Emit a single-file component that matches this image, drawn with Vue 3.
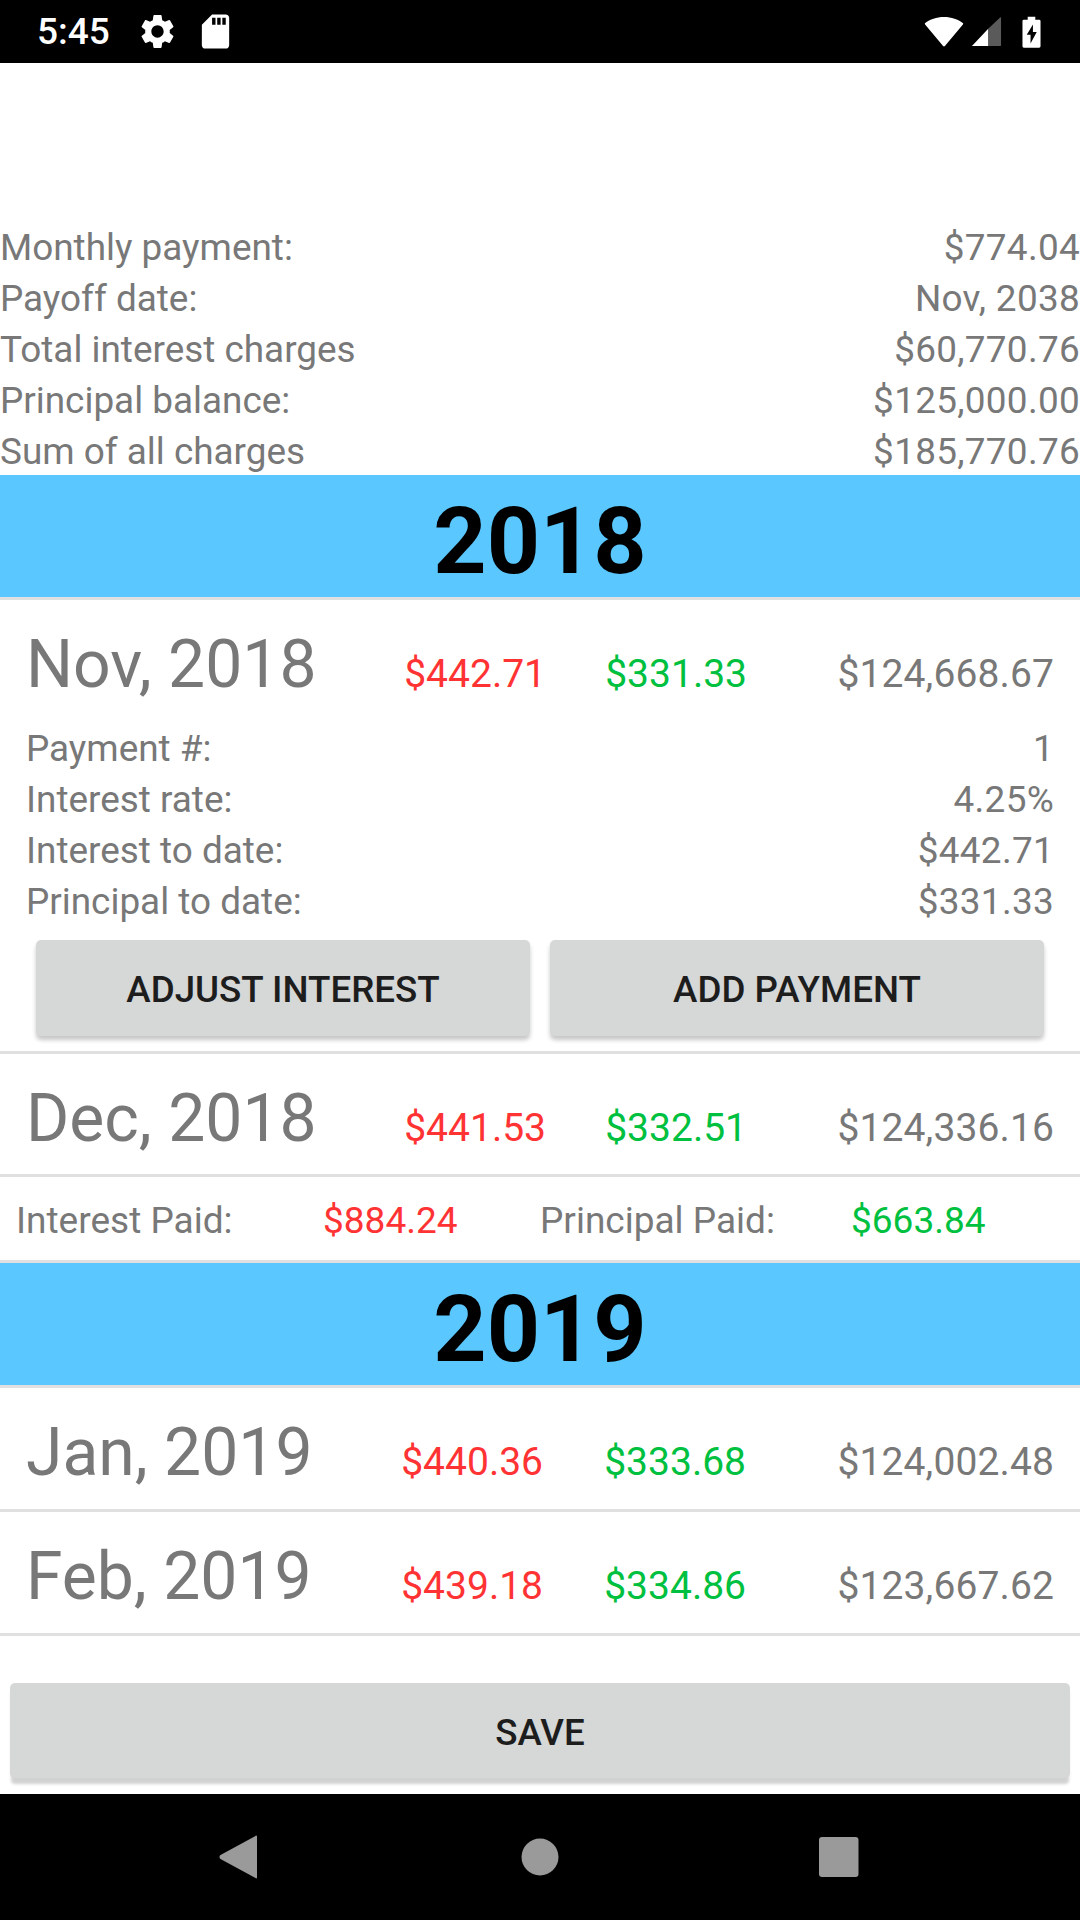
<script setup>
const summary = [
  ['Monthly payment:', '$774.04'],
  ['Payoff date:', 'Nov, 2038'],
  ['Total interest charges', '$60,770.76'],
  ['Principal balance:', '$125,000.00'],
  ['Sum of all charges', '$185,770.76'],
]
const details = [
  ['Payment #:', '1'],
  ['Interest rate:', '4.25%'],
  ['Interest to date:', '$442.71'],
  ['Principal to date:', '$331.33'],
]
</script>

<template>
  <div class="screen">
    <header class="status">
      <span class="time">5:45</span>
      <svg class="ic gear" viewBox="0 0 24 24"><path fill="#fff" d="M19.14 12.94c.04-.3.06-.61.06-.94 0-.32-.02-.64-.07-.94l2.03-1.58a.49.49 0 0 0 .12-.61l-1.92-3.32a.488.488 0 0 0-.59-.22l-2.39.96c-.5-.38-1.03-.7-1.62-.94l-.36-2.54a.484.484 0 0 0-.48-.41h-3.84c-.24 0-.43.17-.47.41l-.36 2.54c-.59.24-1.13.57-1.62.94l-2.39-.96c-.22-.08-.47 0-.59.22L2.74 8.87c-.12.21-.08.47.12.61l2.03 1.58c-.05.3-.09.63-.09.94s.02.64.07.94l-2.03 1.58a.49.49 0 0 0-.12.61l1.92 3.32c.12.22.37.29.59.22l2.39-.96c.5.38 1.03.7 1.62.94l.36 2.54c.05.24.24.41.48.41h3.84c.24 0 .44-.17.47-.41l.36-2.54c.59-.24 1.13-.56 1.62-.94l2.39.96c.22.08.47 0 .59-.22l1.92-3.32c.12-.22.07-.47-.12-.61l-2.01-1.58zM12 15.6c-1.98 0-3.6-1.62-3.6-3.6s1.62-3.6 3.6-3.6 3.6 1.62 3.6 3.6-1.62 3.6-3.6 3.6z"/></svg>
      <svg class="ic sd" viewBox="0 0 24 24"><path fill="#fff" d="M18 2h-8L4.02 8 4 20c0 1.1.9 2 2 2h12c1.1 0 2-.9 2-2V4c0-1.1-.9-2-2-2zm-6 6h-2V4h2v4zm3 0h-2V4h2v4zm3 0h-2V4h2v4z"/></svg>
      <span class="grow"></span>
      <svg class="wifi" viewBox="0 0 42 34"><path fill="#fff" d="M21 1C13 1 6 3.500 1 7.500a1 1 0 0 0-.1 1.500L19.800 31.600a1.600 1.600 0 0 0 2.400 0L41.100 9a1 1 0 0 0-.1-1.500C36 3.500 29 1 21 1z"/></svg>
      <svg class="signal" viewBox="0 0 32 32"><path fill="#fff" d="M1 31 18 13v18H1.500a.5.500 0 0 1-.5-.5z"/><path fill="#5a5a5a" d="M18 13 30 1.500c.5-.5 1-.2 1 .5v28c0 .6-.4 1-1 1H18z"/></svg>
      <svg class="batt" viewBox="0 0 20 34"><path fill="#fff" fill-rule="evenodd" d="M6 1h8v3h4a1.500 1.500 0 0 1 1.500 1.500v26.500a1.500 1.500 0 0 1-1.500 1.500H2A1.500 1.500 0 0 1 .5 32V5.500A1.500 1.500 0 0 1 2 4h4zM11.500 9 5 20h4v9l6.500-12h-4z"/></svg>
    </header>

    <main class="content">
      <section class="summary">
        <div v-for="r in summary" :key="r[0]" class="line"><span>{{ r[0] }}</span><span class="val">{{ r[1] }}</span></div>
      </section>

      <h2 class="year">2018</h2>
      <article class="entry">
        <div class="head">
          <span class="month">Nov, 2018</span><span class="red">$442.71</span><span class="green">$331.33</span><span class="bal">$124,668.67</span>
        </div>
        <div class="details">
          <div v-for="r in details" :key="r[0]" class="line"><span>{{ r[0] }}</span><span class="val">{{ r[1] }}</span></div>
        </div>
        <div class="actions">
          <button class="btn">ADJUST INTEREST</button>
          <button class="btn">ADD PAYMENT</button>
        </div>
      </article>
      <article class="entry">
        <div class="head">
          <span class="month">Dec, 2018</span><span class="red">$441.53</span><span class="green">$332.51</span><span class="bal">$124,336.16</span>
        </div>
      </article>
      <div class="totals">
        <span class="t1">Interest Paid:</span><span class="t2 red">$884.24</span><span class="t3">Principal Paid:</span><span class="t4 green">$663.84</span>
      </div>

      <h2 class="year">2019</h2>
      <article class="entry">
        <div class="head tight">
          <span class="month">Jan, 2019</span><span class="red">$440.36</span><span class="green">$333.68</span><span class="bal">$124,002.48</span>
        </div>
      </article>
      <article class="entry">
        <div class="head tight">
          <span class="month">Feb, 2019</span><span class="red">$439.18</span><span class="green">$334.86</span><span class="bal">$123,667.62</span>
        </div>
      </article>
    </main>

    <div class="savewrap"><button class="btn save">SAVE</button></div>

    <footer class="nav">
      <svg class="navic" viewBox="0 0 40 44"><path fill="#9a9a9a" d="M38 1.500v41c0 1-.8 1.300-1.500.6L1.500 24a2.500 2.500 0 0 1 0-4L36.500.9c.7-.6 1.500-.3 1.500.6z"/></svg>
      <svg class="navic" viewBox="0 0 40 44"><circle cx="20" cy="22" r="18.500" fill="#9a9a9a"/></svg>
      <svg class="navic" viewBox="0 0 40 44"><rect x="0" y="2" width="39.500" height="40" rx="3" fill="#9a9a9a"/></svg>
    </footer>
  </div>
</template>

<style>
html, body { margin: 0; background: #fff; }
</style>

<style scoped>
.screen {
  width: 1080px;
  height: 1920px;
  display: flex;
  flex-direction: column;
  font-family: Roboto, "Liberation Sans", sans-serif;
  color: #787878;
  background: #fff;
  overflow: hidden;
}
.status {
  height: 63px;
  flex: none;
  background: #000;
  display: flex;
  align-items: center;
  padding: 0 39px 0 37px;
  color: #fff;
}
.time { font-size: 37px; font-weight: 500; margin-right: 27px; }
.ic { width: 41px; height: 41px; }
.gear { margin-right: 17px; }
.grow { flex: 1; }
.wifi { width: 40px; height: 32px; margin-right: 7px; }
.signal { width: 31px; height: 31px; margin-right: 20px; }
.batt { width: 19px; height: 34px; }
.content { flex: 1; padding-top: 157px; }
.line {
  display: flex;
  justify-content: space-between;
  font-size: 36.9px;
  line-height: 56px;
  height: 51px;
}
.val { letter-spacing: .3px; }
.year {
  margin: 0;
  height: 122px;
  line-height: 134px;
  background: #5ac8ff;
  color: #000;
  text-align: center;
  font-size: 93px;
  font-weight: 700;
  border-bottom: 3px solid #e0e0e0;
  box-sizing: content-box;
  overflow: hidden;
}
.entry { border-bottom: 3px solid #e0e0e0; }
.head {
  display: grid;
  grid-template-columns: 1fr 152px 201px 307px;
  align-items: baseline;
  padding: 0 26px;
  height: 120px;
  line-height: 130px;
}
.head.tight { grid-template-columns: 367px 150px 203px 308px; height: 121px; }
.month { font-size: 66px; white-space: nowrap; }
.head .red, .head .green, .bal { font-size: 39px; justify-self: end; white-space: nowrap; }
.bal { letter-spacing: .12px; }
.red { color: #ff3333; }
.green { color: #00c040; }
.details { padding: 0 26px; margin-top: 1px; }
.actions {
  display: grid;
  grid-template-columns: 1fr 1fr;
  gap: 20px;
  padding: 15px 36px 15px;
}
.btn {
  border: 0;
  background: #d6d7d7;
  border-radius: 5px;
  color: #1d1d1d;
  font: 500 36.75px Roboto, sans-serif;
  height: 96px;
  padding: 3px 0 0;
  box-shadow: 0 4px 4px rgba(0,0,0,.22);
}
.totals {
  height: 83px;
  line-height: 88px;
  border-bottom: 3px solid #e0e0e0;
  font-size: 37px;
  display: grid;
  grid-template-columns: 307px 217px 311px auto;
  padding-left: 16px;
  overflow: hidden;
}
.savewrap { padding: 0 10px 16px; flex: none; }
.save { width: 100%; display: block; height: 95px; box-shadow: 0 7px 3px -1px rgba(0,0,0,.18); }
.nav {
  height: 126px;
  flex: none;
  background: #000;
  display: flex;
  align-items: center;
  padding-left: 219px;
}
.navic { width: 40px; height: 44px; flex: none; }
.nav .navic:nth-child(2) { margin: 0 258.500px 0 261px; }
</style>
